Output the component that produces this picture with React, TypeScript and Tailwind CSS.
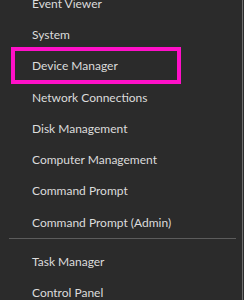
import React from "react";

const topItems = [
  "Event Viewer",
  "System",
  "Device Manager",
  "Network Connections",
  "Disk Management",
  "Computer Management",
  "Command Prompt",
  "Command Prompt (Admin)",
];

const bottomItems = ["Task Manager", "Control Panel"];

const MenuItem = ({ label }: { label: string }) => (
  <div className="h-[31.3px] flex items-center pl-[32px] text-[12px] text-[#dcdcdc] whitespace-nowrap">
    {label}
  </div>
);

const App = () => {
  return (
    <div
      className="w-[244px] h-[300px] bg-[#2b2b2b] overflow-hidden flex relative"
      style={{ fontFamily: 'Lato, "Noto Sans", sans-serif' }}
    >
      <div className="w-[242px] h-full flex flex-col">
        <div className="-mt-[12px] flex flex-col">
          {topItems.map((item) => (
            <MenuItem key={item} label={item} />
          ))}
        </div>
        <div className="pb-[6.5px] pl-[9px] pr-[6px]">
          <div className="h-px bg-[#5c5c5c]" />
        </div>
        <div className="flex flex-col">
          {bottomItems.map((item) => (
            <MenuItem key={item} label={item} />
          ))}
        </div>
      </div>
      <div className="w-px h-full bg-[#6e6e6e]" />
      <div className="w-px h-full bg-[#2b2b2b]" />

      {/* highlight box around Device Manager */}
      <div className="absolute left-[11px] top-[47px] w-[170px] h-[37px] border-4 border-[#ff10c8]" />
    </div>
  );
};

export default App;
